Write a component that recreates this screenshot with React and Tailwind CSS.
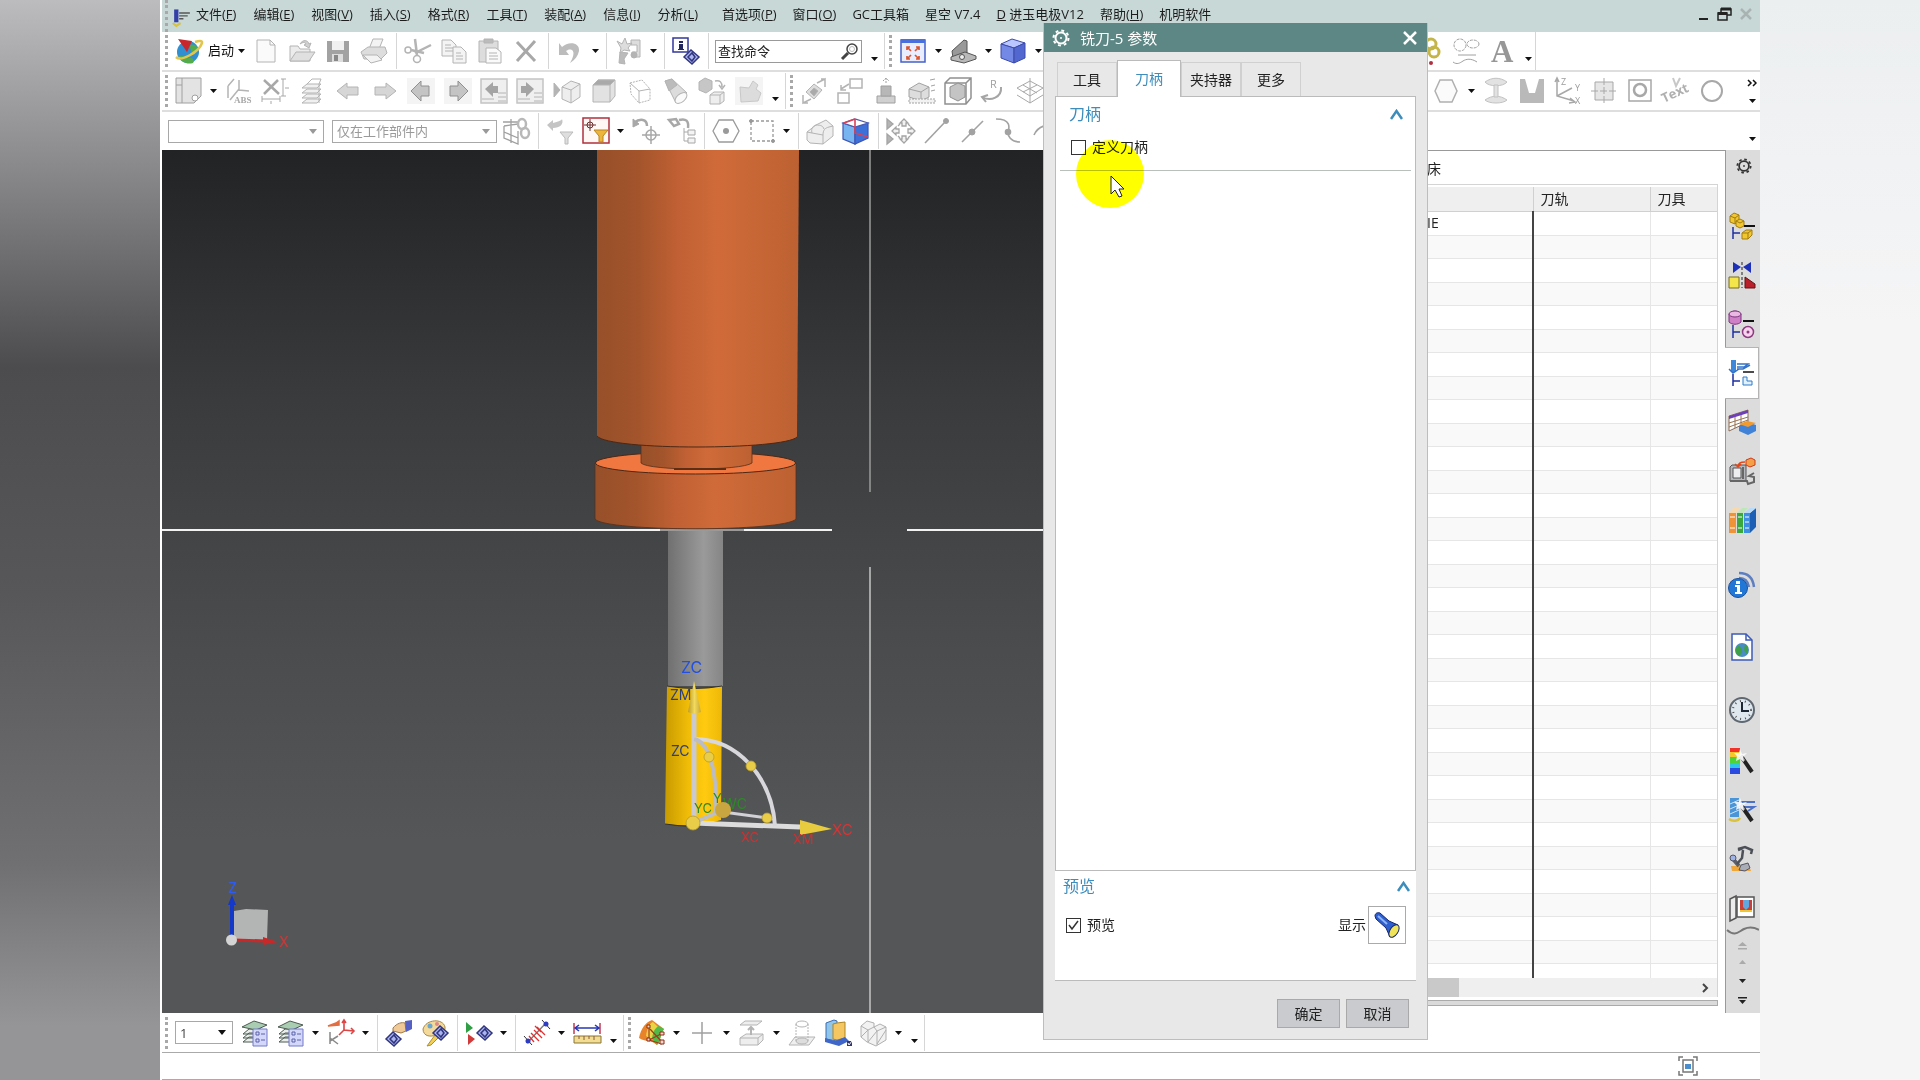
import React, { useState } from 'react';

const fileMenus = [
  ['文件', 'F'],
  ['编辑', 'E'],
  ['视图', 'V'],
  ['插入', 'S'],
  ['格式', 'R'],
  ['工具', 'T'],
  ['装配', 'A'],
  ['信息', 'I'],
  ['分析', 'L'],
];

const extraMenus = [
  ['首选项', 'P'],
  ['窗口', 'O'],
  ['GC工具箱'],
  ['星空 V7.4'],
  ['进玉电极V12', 'D', true],
  ['帮助', 'H'],
  ['机明软件'],
];

const G = '#b4b4b4';
const L = '#ececec';

const sheets = (
  <g stroke="#4d5a52" fill="#e9eeea">
    <path d="M2 23l6-5h12l-6 5zM2 19l6-5h12l-6 5zM2 15l6-5h12l-6 5z" />
    <path d="M1 8l12-6 13 4-11 5z" fill="#a9cdb0" />
    <path d="M12 10h14v17H12z" fill="#d3d8fb" stroke="#7279c8" />
    <path d="M15 13h3v3h-3zM15 20h3v3h-3zM20 15h4M20 21h4" fill="none" stroke="#5a61a8" />
  </g>
);
const wand = (
  <g>
    <path d="M13 9l11 16" stroke="#222" strokeWidth="4" />
    <path d="M13 9l3 5" stroke="#999" strokeWidth="3" />
    <path d="M12 2l2 5 5-1-4 4 1 5-4-3-4 2 1-5-3-3 5 0z" fill="#fff" opacity=".85" />
  </g>
);
const rhomb = <path d="M0 7l7-7 8 7-7 7zM4 7l4-4 3 4-3 4z" fill="#aab4ee" stroke="#30357e" strokeWidth="1.5" />;

const icons = {
  app: <g><path d="M3 2h6v18H3z" fill="#3440a8" /><path d="M10 7h15M10 11h12M10 15h6" stroke="#555" strokeWidth="2" /><path d="M1 21l5 4 6-4" stroke="#d9c23c" strokeWidth="3" fill="none" /></g>,
  start: <g><circle cx="13" cy="15" r="11" fill="#2f8fd0" /><path d="M4 19c4-1 6 3 10 2s6 3 4 5c-6 2-12-1-14-7zM14 8c6-2 9 2 9 6l-6 2z" fill="#53ab4c" /><path d="M1 20C6 25 24 15 27 6c1-3-4-2-7-1" fill="none" stroke="#e2c64b" strokeWidth="2.5" /><path d="M3 2l14 2-5 11z" fill="#c8262d" /></g>,
  file: <g stroke={G} fill="#fafafa"><path d="M5 3h13l5 5v17H5z" /><path d="M18 3v5h5" fill="none" /></g>,
  open: <g stroke={G} fill={L}><path d="M2 24V9h8l2 3h10v12z" /><path d="M2 24l6-9h19l-6 9z" fill="#e0e0e0" /><path d="M12 7c3-5 8-4 9 0l2-1-2 5-5-3 2-1c-1-2-3-2-6 0z" fill="#d0d0d0" /></g>,
  save: <g><path d="M3 4h22v21H3z" fill="#a2a2a2" /><path d="M8 4h12v9H8z" fill="#f1f1f1" /><path d="M8 17h11v8H8z" fill="#ddd" /><path d="M10 18h4v6h-4z" fill="#888" /></g>,
  print: <g stroke={G} fill="#f3f3f3"><path d="M9 12l4-10h10l-4 10z" /><path d="M1 15l7-5h17l2 6-6 6H4z" fill="#ddd" /><path d="M3 18h14l5 5-11 3z" /></g>,
  cut: <g stroke={G} strokeWidth="2.5" fill="none"><path d="M13 18l-2-16M11 16l16-8" /><path d="M7 13l13 3" /><circle cx="4" cy="13" r="3" strokeWidth="1.5" /><circle cx="13" cy="22" r="3.5" strokeWidth="1.5" /></g>,
  copy: <g stroke={G} fill="#f4f4f4"><path d="M2 3h9l5 5v11H2zM5 8h6M5 11h8M5 14h8" /><path d="M13 10h8l5 5v11H13z" /><path d="M16 16h5M16 19h7M16 22h7" /></g>,
  paste: <g stroke={G} fill="#ddd"><path d="M3 4h19v21H3z" /><path d="M8 2h9v4H8z" fill="#bbb" /><path d="M10 11h10l5 4v11H10z" fill="#fafafa" /><path d="M13 16h8M13 19h9M13 22h9" /></g>,
  del: <path d="M5 5l18 19M23 4L5 24" stroke="#a8a8a8" strokeWidth="3" />,
  undo: <path d="M3 6l3 4c6-6 18-5 17 4-1 5-4 9-9 12 3-5 5-11 2-13-3-1-4 0-6 1l3 4H3z" fill="#bcbcbc" />,
  weld: <g stroke={G} fill="#ddd"><path d="M17 3h9v17h-8v-5h5V8h-6z" /><path d="M6 15l8 1-4 6 1 5-6-1z" fill="#bbb" /><path d="M3 4l5 3 3-6 2 6 5-1-4 5 2 3-6-1-4 3 1-5z" /><circle cx="20" cy="18" r="3" fill={G} /></g>,
  info: <g><path d="M1 1h15v14H1z" fill="#fff" stroke="#33379a" strokeWidth="1.5" /><path d="M7 4h4v2H7zM7 7h4v5h1v1H6v-1h1z" fill="#22265e" /><g transform="translate(12 13)">{rhomb}</g></g>,
  fit: <g><path d="M2 3h24v22H2z" fill="#e8edff" stroke="#4560c8" strokeWidth="1.5" /><path d="M2 2h24v4H2z" fill="#4a70dd" /><path d="M8 10l4 4M20 10l-4 4M8 22l4-4M20 22l-4-4M8 13v-3h3M17 10h3v3M8 19v3h3M17 22h3v-3" stroke="#d8552f" strokeWidth="1.7" fill="none" /></g>,
  seat: <g stroke="#555" fill="#999"><path d="M3 14L15 3l3 1v12l-14 5z" /><path d="M2 20l14-5 11 4v3l-12 4-13-3z" fill="#b8b8b8" /><circle cx="13" cy="20" r="2.5" fill="#eee" /></g>,
  cube: <g stroke="#3c4ba8"><path d="M2 7l11-5 13 4-11 5z" fill="#b9c6ff" /><path d="M2 7l13 4v15L2 21z" fill="#7489e6" /><path d="M26 6v15l-11 5V11z" fill="#5267cf" /></g>,
  chain: <g fill="none"><path d="M1 12l8 4M3 24l8 1" stroke="#8b4aa0" strokeWidth="1.5" /><circle cx="15" cy="7" r="5" stroke="#c3b548" strokeWidth="3" /><circle cx="18" cy="15" r="5" stroke="#c3b548" strokeWidth="3" /><circle cx="15" cy="26" r="2" fill="#b03040" /></g>,
  shapes: <g stroke="#a0a0a0" fill="none"><circle cx="8" cy="8" r="6" strokeDasharray="3 1" /><ellipse cx="21" cy="7" rx="6" ry="4" strokeDasharray="3 1" /><path d="M6 18h18M1 25c4 3 7 1 10-1s8-3 14 1" /></g>,
  letterA: <text x="3" y="25" fontSize="31" fontWeight="700" fill="#979797" fontFamily="Liberation Serif, serif">A</text>,
  sheet: <g stroke="#a0a0a0" fill="#e3e3e3"><path d="M1 1h25v18l-7 7H1z" /><path d="M1 8h6V1M7 8v18" fill="none" /><circle cx="20" cy="21" r="3" fill="#fff" /></g>,
  abs: <g stroke={G} fill="none" strokeWidth="1.5"><path d="M3 9v12M3 9l6-7M14 3v10l10 1M14 12L5 23" /><text x="9" y="26" fontSize="9" fontWeight="700" fill="#a8a8a8" stroke="none" fontFamily="Liberation Serif, serif">ABS</text></g>,
  dims: <g stroke="#a8a8a8" fill="none"><path d="M3 3l15 14M17 3L3 17" strokeWidth="2.5" /><path d="M22 2v17M20 2h5M20 19h5M1 22h18M1 19v6M19 19v6" /><path d="M24 11h4M10 24v3" /></g>,
  layers: <g stroke={G} fill="#f0f0f0"><path d="M4 26l5-4h14l-4 4zM4 21l5-4h14l-4 4zM4 16l5-4h14l-4 4zM4 11l5-4h14l-4 4z" /><path d="M9 7l5-5h9l-2 5v19" fill="none" /></g>,
  left: <path d="M3 14l10-8v4h11v8H13v4z" fill="#d6d6d6" stroke={G} />,
  right: <path d="M25 14L15 6v4H4v8h11v4z" fill="#d6d6d6" stroke={G} />,
  leftBox: <g><path d="M0 1h28v26H0z" fill="#f4f4f4" /><path d="M4 14L14 4v5h8v10h-8v5z" fill="#c4c4c4" stroke="#909090" /></g>,
  rightBox: <g><path d="M0 1h28v26H0z" fill="#f4f4f4" /><path d="M24 14L14 4v5H6v10h8v5z" fill="#c4c4c4" stroke="#909090" /></g>,
  leftPane: <g><path d="M1 2h26v24H1z" fill="#efefef" stroke="#c4c4c4" strokeWidth="1.5" /><path d="M5 12l8-7v4h5v7h-5v4z" fill="#a4a4a4" /><path d="M18 16h8M18 20h8M18 24h8M2 22h12" stroke="#b4b4b4" /></g>,
  rightPane: <g><path d="M1 2h26v24H1z" fill="#efefef" stroke="#c4c4c4" strokeWidth="1.5" /><path d="M18 12l-8-7v4H5v7h5v4z" fill="#a4a4a4" /><path d="M18 16h8M18 20h8M18 24h8M2 22h12" stroke="#b4b4b4" /></g>,
  boxIn: <g stroke={G} fill="#eee"><path d="M1 6l6 7-6 7z" fill={G} /><path d="M9 10l9-6 9 3v13l-9 6-9-4zM9 10l9 3v13M18 13l9-6" /></g>,
  slab: <g stroke={G} fill="#e2e2e2"><path d="M4 8l5-5h17v16l-5 6H4z" /><path d="M4 8l5-5h17l-5 5z" fill="#a9a9a9" /><path d="M21 8v17" fill="none" /></g>,
  wire: <g stroke={G} fill="none" strokeDasharray="2 1"><path d="M4 6l12-3 8 9v11l-11 3-8-9z" /><path d="M4 6l9 8v12M13 14l11-2" strokeDasharray="none" /></g>,
  cone: <g stroke={G} fill="#dcdcdc"><path d="M3 4l7-2 15 14-11 10z" /><ellipse cx="19" cy="21" rx="7" ry="4" fill="#fafafa" transform="rotate(-40 19 21)" /><path d="M3 4l7-2 5 6-8 6z" fill="#bbb" /></g>,
  hexBox: <g stroke={G} fill="#c6c6c6"><path d="M1 5l6-4 7 3v8l-6 4-7-3z" /><path d="M12 18l4-3h10v9l-4 3H12zM12 18h10v9M22 18l4-3" fill="#eee" /><path d="M17 4c5-1 7 1 7 6M21 8l3 4 3-4" fill="none" strokeWidth="1.5" /></g>,
  sack: <g><path d="M0 0h28v28H0z" fill="#f4f4f4" /><path d="M5 10l9 1 4-7 5 4-2 4 5 4-3 8-17 1z" fill="#dcdcdc" stroke="#c8c8c8" /></g>,
  resize: <g stroke={G} fill="#ddd"><path d="M6 15l8-8 8 6-8 9z" /><path d="M10 15l4-4 4 3-4 5z" fill="#aaa" /><path d="M17 6l8-4v8M21 2h4M3 18v8l8-4M3 26h5" fill="none" strokeWidth="1.500" /></g>,
  boxes: <g stroke={G} fill="none" strokeWidth="1.5"><path d="M14 2h12v9H14zM2 16h11v10H2z" /><path d="M5 12l8-5M5 8v5h5" /></g>,
  pedestal: <g stroke="#a0a0a0" fill="#d0d0d0"><path d="M5 19h18v7H5z" /><path d="M9 9h10v10H9z" fill="#b7b7b7" /><path d="M14 1v6M11 4l3-3 3 3" fill="none" strokeDasharray="2 1" /></g>,
  ruler: <g stroke="#a2a2a2" fill="#ddd"><path d="M1 12l10-6 10 4v10l-8 4-12-4zM1 12l12 3v9M13 15l8-5" /><path d="M1 22h26v4H1z" fill="#f2f2f2" strokeDasharray="2 1" /><path d="M22 3l5-1M23 9l4-1M23 14l4-1" /></g>,
  caged: <g stroke="#909090" fill="none"><path d="M1 6l5-5h21v20l-5 6H1zM1 6h21v21M22 6l5-5" strokeWidth="1.5" /><path d="M6 10l8-4 7 3v11l-7 4-8-4z" fill="#c4c4c4" /></g>,
  hook: <g stroke="#a5a5a5" fill="none" strokeWidth="2"><path d="M2 20c9 5 20 0 19-10" /><path d="M6 25l-4-5 6-2" /><text x="10" y="11" fontSize="11" fill="#a0a0a0" stroke="none">R</text></g>,
  mesh: <g stroke="#a8a8a8" fill="none"><path d="M1 11l13-7 13 7-13 8zM1 18l13 8 13-8M7 8l14 8M21 8L7 15M14 1v25" /></g>,
  hexagon: <path d="M3 14L8 3h12l5 11-5 11H8z" fill="#fbfbfb" stroke="#b0b0b0" strokeWidth="1.5" />,
  spool: <g fill="#e2e2e2" stroke="#c2c2c2"><path d="M3 5c7-5 15-5 22 0-4 5-18 5-22 0zM3 23c7-5 15-5 22 0-4 4-18 4-22 0z" /><path d="M12 8h4v12h-4z" /></g>,
  notch: <path d="M2 2h5l4 14h6l4-14h5v24H2z" fill="#b9b9b9" />,
  xyz: <g stroke="#a8a8a8" fill="none"><path d="M3 2v17l17 5M3 19l15-8M1 5l2-4 2 4M16 21l5 4-6 1" strokeWidth="1.5" /><g fontSize="9" fill="#9c9c9c" stroke="none"><text x="7" y="8">Z</text><text x="21" y="14">Y</text><text x="21" y="27">X</text></g></g>,
  target: <g stroke="#a8a8a8"><path d="M5 5h18v18H5z" fill="#e6e6e6" /><path d="M14 1v26M1 14h26" strokeDasharray="7 2" /></g>,
  hole: <g stroke="#a8a8a8" fill="none" strokeWidth="1.5"><path d="M3 3h22v21H3z" /><circle cx="14" cy="13" r="6" strokeWidth="2.5" /></g>,
  text3d: <g fill="#b0b0b0"><text x="2" y="26" fontSize="13" fontWeight="700" transform="rotate(-25 2 26)">Text</text><path d="M11 1l3 8 4-8" stroke="#c8c8c8" fill="none" strokeWidth="2" /></g>,
  circle: <circle cx="14" cy="14" r="10" fill="none" stroke="#a8a8a8" strokeWidth="2" />,
  link: <g stroke="#a0a0a0" fill="none" strokeWidth="1.3"><path d="M2 9l14-2M9 2v24M2 9v12l14 6V14M2 15l14 6M1 5h15" /><ellipse cx="20" cy="7" rx="4" ry="5" stroke="#b8b8b8" strokeWidth="2.5" /><ellipse cx="23" cy="16" rx="4" ry="5" stroke="#b8b8b8" strokeWidth="2.5" /></g>,
  filter: <g fill="#c4c4c4"><path d="M1 8l6-5v3c5-1 9-3 9-4 2 5-2 9-9 9v3z" /><path d="M14 15h13l-5 6v6h-3v-6z" fill="#dedede" stroke="#bbb" /></g>,
  filterOn: <g><path d="M1 1h26v25H1z" fill="#fff8f4" stroke="#b0303e" strokeWidth="1.5" /><circle cx="8" cy="8" r="3" fill="none" stroke="#6d3030" /><path d="M8 2v12M2 8h12" stroke="#6d3030" /><path d="M12 13h14l-5 6v6h-4v-6z" fill="#edb53b" stroke="#b98420" /></g>,
  back: <g stroke="#a8a8a8" fill="none"><path d="M2 6c6-5 13-4 13 3" strokeWidth="2.5" /><path d="M1 2v8l6-3z" fill="#a8a8a8" /><circle cx="19" cy="18" r="5" strokeWidth="1.5" /><path d="M19 9v18M10 18h18" strokeWidth="1.5" /></g>,
  tree: <g stroke="#a8a8a8" fill="#d0d0d0"><path d="M1 3l7-1 3 5-5 2zM11 3c7-2 10 1 9 8" fill="none" strokeWidth="2.5" /><path d="M20 13h7v5h-7zM20 21h7v5h-7z" fill="#f4f4f4" /><path d="M16 15h4M16 24h4M16 11v13" /></g>,
  hexDot: <g><path d="M1 14L7 3h14l6 11-6 11H7z" fill="none" stroke="#9a9a9a" strokeWidth="1.3" /><circle cx="14" cy="14" r="3" fill="#9a9a9a" /></g>,
  marquee: <g stroke="#999" fill="none"><path d="M3 4h22v20H3z" strokeDasharray="3 2" strokeWidth="1.3" /><circle cx="3" cy="4" r="1.5" fill="#999" /><circle cx="25" cy="24" r="1.5" fill="#999" /></g>,
  shell: <g stroke={G} fill="#eee"><path d="M1 15l9-7 10-5 7 6v10l-10 8-13-1-3-3z" /><path d="M10 8c-4 1-5 5-4 8l11 2v9M6 16l-5-1M17 18c0-5 2-7 6-8l4-1M10 8c5 0 7 1 8 4" fill="none" /></g>,
  section: <g strokeWidth="1.2"><path d="M1 6l12 4v17L1 22z" fill="#78b4f0" stroke="#3e55b4" /><path d="M13 10l13-4v15l-13 6z" fill="#3d70d8" stroke="#3e55b4" /><path d="M1 6l12-4 13 4-13 4z" fill="#fff" stroke="#4c5bb0" /><path d="M13 2v14l13 4M13 2L2 6" fill="none" stroke="#d64258" strokeWidth="1.6" /></g>,
  explode: <g stroke="#a4a4a4" fill="#f2f2f2" strokeWidth="1.3"><path d="M1 2l6 5-6 5zM1 17l6 5-6 5z" fill="#b4b4b4" /><path d="M18 2l4 4h-2v3h-4V6h-2zM18 26l4-4h-2v-3h-4v3h-2zM6 14l4-4v2h3v4h-3v2zM29 14l-4-4v2h-3v4h3v2z" /><path d="M12 9l2-2M24 9l-2-2M12 19l2 2M24 19l-2 2" /></g>,
  lineEnd: <g stroke="#a2a2a2" fill="#a2a2a2"><path d="M3 26L24 4" strokeWidth="1.6" /><circle cx="24" cy="4" r="2.5" /></g>,
  lineMid: <g stroke="#a2a2a2" fill="#a2a2a2"><path d="M4 25L25 4" strokeWidth="1.6" /><circle cx="14" cy="15" r="3" /></g>,
  curve: <g stroke="#a2a2a2" fill="none" strokeWidth="1.6"><path d="M2 2c18 0 12 12 12 14s2 9 12 9" /><circle cx="14" cy="15" r="2.5" fill="#a2a2a2" /></g>,
  arc: <path d="M4 18c4-9 14-12 22-8" stroke="#a2a2a2" fill="none" strokeWidth="1.6" />,
  sheets,
  wcs: <g fill="none"><path d="M1 7l8-3 3-2v4z" fill="#e26e42" stroke="#e26e42" strokeWidth="1.500" /><path d="M17 2v9l10 1M17 11l-5 5M24 9l3 3-3 3M15 4l2-3 2 3" stroke="#d44" strokeWidth="1.600" /><path d="M3 13v12M3 19l8 6M3 22l8-5" stroke="#888" strokeWidth="1.500" /></g>,
  pointTo: <g><path d="M8 9c4-5 9-6 12-5l1 8-5 2-8-2z" fill="#f0c997" stroke="#9d7747" /><path d="M20 2l7-1v9l-6 3z" fill="#565fc4" /><g transform="translate(1 13)">{rhomb}</g></g>,
  palette: <g><path d="M2 10C5 0 22-1 24 8c1 6-7 6-10 8s-12 2-12-6z" fill="#f3d99a" stroke="#a98843" /><circle cx="9" cy="7" r="2.5" fill="#6aa7d0" /><circle cx="16" cy="5" r="2" fill="#d88" /><path d="M14 16l-8 11 4-1 9-9z" fill="#f2cf56" stroke="#b18f2a" /><g transform="translate(12 7)">{rhomb}</g></g>,
  play: <g><path d="M1 3l7 6-7 5z" fill="#2f9e44" /><path d="M3 15l7 5-7 6z" fill="#cf3a3a" /><g transform="translate(12 7)">{rhomb}</g></g>,
  hatch: <g><path d="M4 24L22 5" stroke="#777" strokeWidth="1.3" /><path d="M8 14l8 8M11 11l8 8M14 8l8 8M12 7l6 6M6 17l5 6" stroke="#d33" strokeWidth="1.3" /><path d="M19 1l8 9M1 17l8 9" stroke="#333" /><circle cx="23" cy="5" r="2.500" fill="#2d3cc0" /><circle cx="5" cy="22" r="2.500" fill="#2d3cc0" /></g>,
  measure: <g><path d="M1 4v11M27 4v11" stroke="#c33b52" strokeWidth="1.5" /><path d="M3 9h22M6 6L2 9l4 3M22 6l4 3-4 3" stroke="#2738b8" strokeWidth="1.5" fill="none" /><path d="M1 17h27v7H1z" fill="#f2dd92" stroke="#8a7436" /><path d="M6 17v3M11 17v4M16 17v3M21 17v4" stroke="#8a5a36" /></g>,
  rainbow: <g><path d="M1 19C3 9 8 3 14 1l8 6 4 3c-4 5-3 12-7 16-7-6-10-2-18-7z" fill="#e8832b" /><path d="M8 17C9 9 12 4 15 3l5 5-4 14z" fill="#e9d444" /><path d="M14 20c1-8 3-11 7-13l5 3c-4 5-3 12-7 16z" fill="#52ba48" /><path d="M11 7v14l12-6M12 10l12 13M11 21l13 4" stroke="#a23a1c" strokeWidth="1.2" fill="none" /><path d="M9 6h3v3H9zM9 19h3v3H9zM22 13h4v3h-4zM22 21h4v4h-4z" fill="#f6d9cc" stroke="#8a2a14" /></g>,
  plus: <path d="M14 3v22M4 14h20" stroke="#a0a0a0" strokeWidth="1.5" />,
  extrude: <g stroke={G} fill="#eee"><path d="M2 6l5-4h17l-5 4zM2 19l6-4h17v6l-5 5H2zM2 19h18v7M20 19l5-4" /><path d="M13 16v-7M10 11l3-3 3 3" fill="none" strokeWidth="2" /></g>,
  column: <g stroke={G} fill="none"><path d="M1 26l6-8h20l-6 8z" fill="#efefef" /><ellipse cx="14" cy="5" rx="6" ry="3" /><ellipse cx="14" cy="22" rx="6" ry="3" fill="#ddd" /><path d="M8 5v17M20 5v17" strokeDasharray="2 1" /></g>,
  bound: <g><path d="M2 4l8-3 3 1v20l-11-2z" fill="#8fc6ea" stroke="#3a6db5" /><path d="M9 5l4-1 8-1v16l-8 2-4-1z" fill="#f4c763" stroke="#ae8425" /><path d="M1 19l10 3 10-4 4 4-10 5-14-4z" fill="#3f66c8" /><path d="M23 22h5v5h-5z" fill="#35386e" /><path d="M24 24l1 2 3-4" stroke="#fff" fill="none" /></g>,
  frame: <g stroke="#b0b0b0" fill="#f2f2f2"><path d="M1 7l6-5 7 2v4l6-3 6 3v13l-10 6-9-4-6-5z" /><path d="M1 7l7 4v12M8 11l6-3M14 8l3 4v14M17 12l9-4M1 18l7-7M8 23l9-11M17 25l9-14" fill="none" /></g>,
  assemblyNav: <g stroke="#a17c12"><path d="M2 4l4-3 5 2v6l-4 3-5-2z" fill="#f2c62e" /><path d="M2 4l5 2 4-3M7 6v6" fill="none" /><path d="M8 9l4-2 4 2v5l-4 2-4-2z" fill="#f2c62e" /><path d="M8 9l4 2 4-2" fill="none" /><path d="M14 21l4-3h6v5l-4 4h-6z" fill="#f2c62e" /><path d="M14 21h6l4-3M20 21v6" fill="none" /><path d="M5 15v12M5 21h7" stroke="#1d2fa0" strokeWidth="1.500" /><path d="M16 14h11" stroke="#111" strokeWidth="2" /></g>,
  constraint: <g><path d="M5 1l8 5-8 6zM23 1l-8 5 8 6z" fill="#1e2fb8" /><path d="M14 1v26" stroke="#222" strokeDasharray="3 2" /><path d="M1 16h10v11H1z" fill="#f4e64a" stroke="#776c1a" /><path d="M17 16l10 7v4H17z" fill="#b81f2a" stroke="#611" /></g>,
  partNav: <g><path d="M1 4c3-4 9-4 12 0v8c-3 3-9 3-12 0z" fill="#cf7fc6" stroke="#7d3580" /><ellipse cx="7" cy="4" rx="6" ry="3" fill="#eab8e2" stroke="#7d3580" /><path d="M5 15v13M5 22h7" stroke="#1d2fa0" strokeWidth="1.5" /><path d="M15 11h11" stroke="#111" strokeWidth="2" /><circle cx="20" cy="22" r="5.500" fill="#f7d3ee" stroke="#8d3a80" strokeWidth="1.5" /><circle cx="20" cy="22" r="1.5" fill="#8d3a80" /></g>,
  operNav: <g><path d="M3 1h5v12H3z" fill="#3f87d8" /><path d="M1 10l4 4 6-4M9 5h11l-4 3H9M9 10h6l7-4" stroke="#3372c8" fill="none" strokeWidth="1.5" /><path d="M5 15v12M5 22h7" stroke="#1d2fa0" strokeWidth="1.5" /><path d="M15 13h11" stroke="#111" strokeWidth="1.500" /><path d="M15 18h4v4h5v4h-9z" fill="#e2f1ff" stroke="#2d7bc8" /></g>,
  calendar: <g><path d="M1 8l19-6v12L1 23z" fill="#fff" stroke="#8a6a55" /><path d="M1 8l19-6v3L1 11z" fill="#6d3fb8" /><path d="M1 15l19-6M1 19l19-7M7 9v11M13 7v11" stroke="#9a7350" /><path d="M11 18l8-4 9 3v6l-8 4-9-4z" fill="#3f82d8" /><path d="M11 16l8-3 9 2-8 4z" fill="#f29a2e" /></g>,
  machine: <g><path d="M2 10l2-2h14v16H2z" fill="#b4b8bc" stroke="#555" /><path d="M5 11h8v10H5z" fill="#eceef0" stroke="#555" /><path d="M15 10v12" stroke="#666" strokeWidth="2" /><path d="M2 24h17l1 3 6-2v-5l-5-1 5-3" fill="none" stroke="#666" strokeWidth="2" /><path d="M18 3l5-2 4 2v5l-5 2-4-2z" fill="#f4a049" stroke="#cf3a18" /><path d="M17 5c-5 0-6 1-7 4M7 7l3 3 3-3" stroke="#e0481c" strokeWidth="1.500" fill="none" /></g>,
  books: <g><path d="M1 7h7v20H1z" fill="#ef9338" /><path d="M1 7l4-5h7l-4 5z" fill="#f8d9ae" /><path d="M9 7h6v20H9z" fill="#3ba83e" /><path d="M9 7l5-5h6l-5 5z" fill="#bfe6b6" /><path d="M16 7h6v20h-6z" fill="#3c8fe2" /><path d="M22 7l6-5v19l-6 6z" fill="#1c5fb4" /><path d="M16 7l6-5h6l-6 5z" fill="#b7dbfa" /><path d="M2 11h5M10 11h4M17 11h4M2 22h5M10 22h4M17 22h4M17 16h4" stroke="#fff" /></g>,
  feed: <g><path d="M11 3c9 0 14 5 15 14M11 8c5 0 9 3 10 9" stroke="#5d7fc0" strokeWidth="2.500" fill="none" /><circle cx="10" cy="18" r="9.500" fill="#2277d6" stroke="#1c4f9c" /><path d="M8 11h4v3H8zM7 15h5v7h2v2H7v-2h2v-5H7z" fill="#fff" /></g>,
  page: <g><path d="M4 1h14l6 6v20H4z" fill="#fff" stroke="#3d5bb8" strokeWidth="1.5" /><path d="M18 1v6h6" fill="none" stroke="#3d5bb8" strokeWidth="1.5" /><circle cx="14" cy="17" r="7" fill="#4a8cc4" /><path d="M8 15c3-4 5-1 6 2s-2 5-3 6c-3-1-4-5-3-8zM17 11c3 2 4 6 2 10l-3-4z" fill="#3fa04a" /></g>,
  clock: <g><circle cx="14" cy="14" r="12" fill="#dfe7ef" stroke="#5f6770" strokeWidth="2" /><circle cx="14" cy="14" r="9" fill="none" stroke="#555" strokeDasharray="1 4" strokeWidth="2" /><path d="M14 6v9h7" stroke="#1c2733" strokeWidth="2" fill="none" /></g>,
  spectrum: <g><path d="M2 1h10v5H2z" fill="#f0322b" /><path d="M2 5h10v5H2z" fill="#f5c92e" /><path d="M2 10h10v6H2z" fill="#4fd437" /><path d="M2 16h10v5H2z" fill="#2cc6e8" /><path d="M2 21h10v6H2z" fill="#2b4ae0" />{wand}</g>,
  drill: <g><path d="M2 2h9v19H2z" fill="#4a94d8" /><path d="M2 8l9-4M2 13l9-4M2 18l9-4" stroke="#cfe4f7" /><path d="M12 6h15M14 11h12l-6 4" stroke="#4a72c8" strokeWidth="2" fill="none" /><path d="M1 23c4 3 9 2 11-1" stroke="#d9c23c" strokeWidth="2.5" fill="none" />{wand}</g>,
  robot: <g><path d="M3 21h18l2 5H4z" fill="#efa63a" /><path d="M5 14l6 7" stroke="#5c6068" strokeWidth="4" /><path d="M9 19l5-6 1-8M10 4l7-2 7 3-1 4M15 3l-5 2" fill="none" stroke="#4c5058" strokeWidth="2.500" /><path d="M13 20l7-2 2 5-5 3-6-1z" fill="#a9adb5" stroke="#556" /><circle cx="5" cy="13" r="3" fill="#9fb4e4" stroke="#556" /></g>,
  door: <g><path d="M9 3h17v20H9z" fill="#fff" stroke="#555" strokeWidth="1.500" /><path d="M2 5l6-3v22l-6 3z" fill="#ececec" stroke="#555" strokeWidth="1.500" /><path d="M12 6h12v12H12z" fill="#c9403a" /><path d="M15 6h6v7l-3 3-3-3z" fill="#62a8e0" /><path d="M12 16h12v2H12z" fill="#f2c62e" /></g>,
};

function Icon({ name, size = 28 }) {
  return (
    <svg className="overflow-visible" width={size} height={size} viewBox="0 0 28 28" fill="none" aria-hidden="true">
      {icons[name]}
    </svg>
  );
}

const Tool = ({ name }) => (
  <button type="button" aria-label={name} className="flex h-9 w-9 shrink-0 items-center justify-center hover:bg-gray-100">
    <Icon name={name} />
  </button>
);

const Arrow = ({ low }) => (
  <span className={low ? 'flex w-[14px] shrink-0 justify-end pt-4 pr-[2px]' : 'flex w-[14px] shrink-0 justify-center'}>
    <svg width="7" height="4" viewBox="0 0 7 4"><path d="M0 0h7L3.500 4z" fill="#111" /></svg>
  </span>
);

const Sep = () => <span className="mr-[3px] ml-1 h-9 w-px shrink-0 bg-[#d6d6d6]" />;
const Grip = () => <span className="mr-[3px] ml-px h-8 w-0 shrink-0 border-l-3 border-dotted border-[#a8a8a8]" />;

// "|" separator, "v" drop-down arrow, "_" lowered overflow arrow, ":" grip
function Strip({ items }) {
  return items.map((it, i) => {
    if (it === '|') return <Sep key={i} />;
    if (it === 'v') return <Arrow key={i} />;
    if (it === '_') return <Arrow key={i} low />;
    if (it === ':') return <Grip key={i} />;
    return <Tool key={i} name={it} />;
  });
}

function MenuGroup({ items, className }) {
  return (
    <nav className={'flex pb-1 ' + className}>
      {items.map(([name, key, before]) => (
        <button key={name} type="button" className="whitespace-nowrap">
          {before && <><u>{key}</u>{' '}</>}
          {name}
          {key && !before && <>(<u>{key}</u>)</>}
        </button>
      ))}
    </nav>
  );
}

function DropDown({ label, value, className, arrow }) {
  return (
    <span className={'relative flex shrink-0 items-center ' + className}>
      <select aria-label={label} disabled={arrow !== '#111'} className="h-[23px] w-full appearance-none border border-[#a8a8a8] bg-white pl-1 text-[13px] leading-5 text-[#444] disabled:text-[#9a9a9a]">
        <option>{value}</option>
      </select>
      <svg className="pointer-events-none absolute right-[7px]" width="8" height="5" viewBox="0 0 8 5"><path d="M0 0h8L4 5z" fill={arrow} /></svg>
    </span>
  );
}

const Gear = ({ color, size }) => (
  <svg width={size} height={size} viewBox="0 0 18 18" fill="none" stroke={color} aria-hidden="true">
    <circle cx="9" cy="9" r="5.500" strokeWidth="2" />
    <circle cx="9" cy="9" r="7.500" strokeWidth="2" strokeDasharray="2.900 3" />
    <circle cx="9" cy="9" r="1" fill={color} stroke="none" />
  </svg>
);

const Chevron = () => (
  <svg width="13" height="11" viewBox="0 0 13 11" fill="none" stroke="#3c8cbc" strokeWidth="2.500" aria-hidden="true">
    <path d="M1 10l5.500-8L12 10" />
  </svg>
);

function Viewport() {
  return (
    <svg className="block h-full w-full" viewBox="162 150 882 863" preserveAspectRatio="xMinYMin slice" role="img" aria-label="刀具预览">
      <defs>
        <linearGradient id="bg" x1="0" y1="0" x2="0" y2="1">
          <stop offset="0" stopColor="#212325" />
          <stop offset=".29" stopColor="#393b3c" />
          <stop offset=".56" stopColor="#4a4b4d" />
          <stop offset=".8" stopColor="#555658" />
        </linearGradient>
        <linearGradient id="holder">
          <stop offset="0" stopColor="#96502a" />
          <stop offset=".2" stopColor="#a3542b" />
          <stop offset=".4" stopColor="#c06034" />
          <stop offset=".6" stopColor="#d06b39" />
          <stop offset="1" stopColor="#bd6132" />
        </linearGradient>
        <linearGradient id="shank">
          <stop offset="0" stopColor="#707070" />
          <stop offset=".65" stopColor="#9a9a9a" />
          <stop offset="1" stopColor="#858585" />
        </linearGradient>
        <linearGradient id="flute">
          <stop offset="0" stopColor="#c79a00" />
          <stop offset=".4" stopColor="#f0bc08" />
          <stop offset=".7" stopColor="#ffca10" />
          <stop offset="1" stopColor="#eeb808" />
        </linearGradient>
        <linearGradient id="cone">
          <stop offset="0" stopColor="#b89c2e" />
          <stop offset=".5" stopColor="#f3d95c" />
          <stop offset="1" stopColor="#c5a838" />
        </linearGradient>
      </defs>
      <rect x="162" y="150" width="882" height="863" fill="url(#bg)" />

      <path d="M870 150v342" stroke="#9b9b9b" strokeWidth="1.500" />
      <path d="M870 567v446" stroke="#c6c6c6" strokeWidth="1.500" />
      <path d="M162 530h670M907 530h137" stroke="#f2f2f2" strokeWidth="2" />

      <path d="M668 529h55v157h-55z" fill="url(#shank)" />
      <path d="M660 530h84" stroke="#999" strokeWidth="2" />
      <path d="M667 686q28 5 55 0l-1 134q-26 8-56 4z" fill="url(#flute)" />
      <path d="M667 686q28 5 55 0" fill="none" stroke="#333" />
      <path d="M665 824q28 4 40 1" fill="none" stroke="#333" />

      <path d="M595 463v56c10 13 190 13 201 0v-56z" fill="url(#holder)" stroke="#57301c" strokeWidth=".8" />
      <ellipse cx="695.500" cy="463" rx="100" ry="11" fill="#f07840" stroke="#4c2815" />
      <path d="M641 440v23c8 8 100 8 111 0v-23z" fill="url(#holder)" stroke="#57301c" strokeWidth=".8" />
      <path d="M674 469h52" stroke="#5d2e16" strokeWidth="2" />
      <path d="M597 150v286c12 15 188 14 200 1l2-287z" fill="url(#holder)" />
      <path d="M597 436c12 15 188 14 200 1" fill="none" stroke="#4c2815" />

      <path d="M694 823V712" stroke="#c9c9cf" strokeWidth="5" />
      <path d="M694 681l7 31q-7 3-13 0z" fill="url(#cone)" />
      <path d="M693 823l107 4" stroke="#dcdcdc" strokeWidth="5" />
      <path d="M693 823l30-13" stroke="#bdbdc4" strokeWidth="4" />
      <path d="M723 812l52 7" stroke="#d2d2d6" strokeWidth="3" />
      <path d="M694 739c45 0 78 40 81 87" fill="none" stroke="#d8d8dc" strokeWidth="4" />
      <path d="M694 739c18 4 23 40 22 75" fill="none" stroke="#bcbcc4" strokeWidth="4" />
      <path d="M800 820l32 9-32 6z" fill="#e8cb3e" />
      <g fontFamily="Inter, 'Liberation Sans', sans-serif" fontSize="14">
        <text x="681" y="673" fontSize="16" fill="#2350e0">ZC</text>
        <text x="670" y="700" fill="#2b3f7c">ZM</text>
        <text x="671" y="756" fill="#2b3f7c">ZC</text>
        <text x="694" y="813" fontSize="13" fill="#2c8a24">YC</text>
        <text x="713" y="803" fontSize="13" fill="#2c8a24">Y</text>
        <text x="723" y="809" fill="#2c8a24">WC</text>
        <text x="741" y="842" fontSize="13" fill="#d03030">XC</text>
        <text x="793" y="844" fontSize="13" fill="#d03030">XM</text>
        <text x="832" y="835" fontSize="15" fill="#d83434">XC</text>
      </g>
      <circle cx="723" cy="810" r="8" fill="#c9a640" />
      <g fill="#e9cd49" stroke="#b59a2c" strokeWidth=".8">
        <circle cx="693" cy="823" r="7" />
        <circle cx="709" cy="757" r="5" />
        <circle cx="751" cy="766" r="5" />
        <circle cx="767" cy="818" r="5" />
      </g>

      <path d="M234 911l12-2 22 1-1 30h-33z" fill="#b3b4b4" />
      <path d="M232 940v-40" stroke="#1438c8" strokeWidth="4" />
      <path d="M232 895l4 10h-8z" fill="#1438c8" />
      <path d="M234 940l32 1" stroke="#c82828" strokeWidth="3" />
      <path d="M263 937l15 5-15 3z" fill="#c82828" />
      <circle cx="231.500" cy="940" r="5.500" fill="#d4d4d4" />
      <g fontFamily="Inter, 'Liberation Sans', sans-serif" fontSize="14" fontWeight="500">
        <text x="228" y="893" fill="#2f5cf0">Z</text>
        <text x="279" y="947" fill="#c43a3a">X</text>
      </g>
    </svg>
  );
}

function Navigator() {
  const rows = Array.from({ length: 33 }, (_, i) => i);
  return (
    <section className="flex w-[682px] shrink-0 flex-col border-t border-[#999] bg-white pr-[7px]">
      <h2 className="h-[33px] pl-[384px] text-sm leading-[35px] text-[#222]">床</h2>
      <div className="min-h-0 flex-1 overflow-hidden border-t border-r border-[#d4d4d4] pt-[2px]">
        <table className="w-full table-fixed border-collapse text-sm text-[#222]">
          <thead>
            <tr className="h-6 bg-[#efefef] text-left">
              <th className="border-b border-[#d0d0d0]" aria-label="名称" />
              <th className="w-[117px] border-r border-b border-l border-[#d0d0d0] pl-[7px] leading-5 font-normal">刀轨</th>
              <th className="w-[67px] border-b border-[#d0d0d0] pl-[7px] leading-5 font-normal">刀具</th>
            </tr>
          </thead>
          <tbody>
            {rows.map((i) => (
              <tr key={i} className={i % 2 ? 'h-[23px] bg-[#f9f9f9]' : 'h-6 bg-white'}>
                <td className="border-b border-[#e6e6e6] p-0 pl-[384px] leading-5">{i === 0 && 'IE'}</td>
                <td className="border-r border-b border-l-2 border-[#e6e6e6] border-l-[#444]" />
                <td className="border-b border-[#e6e6e6]" />
              </tr>
            ))}
          </tbody>
        </table>
      </div>
      <div className="flex h-[19px] shrink-0 border-r border-[#d4d4d4] bg-[#efefef]">
        <div className="w-[416px] bg-[#c9c9c9]" />
        <button type="button" aria-label="向右滚动" className="mr-2 ml-auto">
          <svg width="8" height="10" viewBox="0 0 8 10" fill="none" stroke="#444" strokeWidth="2"><path d="M2 1l4 4-4 4" /></svg>
        </button>
      </div>
      <div className="mt-[3px] mb-[7px] h-[6px] shrink-0 border border-[#aaa] bg-[#dadada]" />
    </section>
  );
}

const SideButton = ({ name }) => (
  <button type="button" aria-label={name} className="shrink-0"><Icon name={name} /></button>
);

function Sidebar() {
  return (
    <nav className="flex w-[35px] shrink-0 flex-col items-center border-l border-[#999] bg-[#dcdcdc] pr-[2px]">
      <button type="button" aria-label="资源条选项" className="mt-2 ml-1"><Gear color="#333" size={16} /></button>
      <div className="mt-[38px] flex flex-col items-center gap-[21px]">
        <SideButton name="assemblyNav" />
        <SideButton name="constraint" />
        <SideButton name="partNav" />
        <button type="button" aria-label="operNav" className="-mx-[2px] -my-3 flex w-[34px] justify-center border border-l-0 border-[#b4b4b4] bg-white py-[11px]">
          <Icon name="operNav" />
        </button>
        <SideButton name="calendar" />
        <SideButton name="machine" />
        <SideButton name="books" />
      </div>
      <div className="mt-9 flex flex-col items-center gap-[35px]">
        <SideButton name="feed" />
        <SideButton name="page" />
        <SideButton name="clock" />
      </div>
      <div className="mt-[23px] flex flex-col items-center gap-[21px]">
        <SideButton name="spectrum" />
        <SideButton name="drill" />
        <SideButton name="robot" />
        <SideButton name="door" />
      </div>
      <svg className="mt-1" width="33" height="82" viewBox="0 0 33 82" aria-hidden="true">
        <path d="M1 4c8 7 11 2 17-1s10-2 15 1" fill="none" stroke="#777" strokeWidth="2" />
        <path d="M12 20h9l-4.500-4zM12 22h9v1.500h-9zM13 38h7l-3.500-4z" fill="#aaa" />
        <path d="M13 53h7l-3.500 4zM12 71h9v1.500h-9zM13 74h7l-3.500 4z" fill="#222" />
      </svg>
    </nav>
  );
}

function ToolDialog() {
  const [tab, setTab] = useState('刀柄');
  const [shank, setShank] = useState(false);
  const [preview, setPreview] = useState(true);
  const check = 'h-[15px] w-[15px] appearance-none border border-[#333] bg-white checked:bg-white';
  return (
    <div role="dialog" aria-label="铣刀-5 参数" className="absolute top-[23px] right-[332px] bottom-10 flex w-[385px] flex-col border border-t-0 border-[#bdbdbd] bg-[#e8e8e8] text-sm leading-5 text-[#222]">
      <header className="flex h-[29px] shrink-0 items-center bg-[#5c8784] pr-[9px] pl-2 text-white">
        <Gear color="#fff" size={18} />
        <h1 className="ml-[10px] text-[15px]">铣刀-5 参数</h1>
        <button type="button" aria-label="关闭" className="ml-auto">
          <svg width="16" height="16" viewBox="0 0 16 16" stroke="#fff" strokeWidth="2.500"><path d="M2 2l12 12M14 2L2 14" /></svg>
        </button>
      </header>
      <div role="tablist" className="flex shrink-0 items-end px-[13px] pt-2">
        {['工具', '刀柄', '夹持器', '更多'].map((t) => (
          <button
            key={t}
            type="button"
            role="tab"
            aria-selected={t === tab}
            onClick={() => setTab(t)}
            className={
              t === tab
                ? 'relative z-10 -mb-px h-[37px] w-16 border border-b-0 border-[#bbb] bg-white text-[#3c8cbc]'
                : 'h-[34px] w-[60px] border border-b-0 border-[#d0d0d0]'
            }
          >
            {t}
          </button>
        ))}
      </div>
      <section className="mx-[11px] flex min-h-0 flex-1 flex-col border border-[#bbb] bg-white">
        <div className="flex items-center justify-between pt-[5px] pr-3 pl-[13px]">
          <h2 className="text-base leading-6 text-[#3c8cbc]">刀柄</h2>
          <Chevron />
        </div>
        <label className="mx-1 mt-2 flex items-center border-b border-[#b9c0bc] pt-[3px] pb-[13px] pl-[11px]">
          <input type="checkbox" checked={shank} onChange={(e) => setShank(e.target.checked)} className={check} />
          <span className="ml-[6px]">定义刀柄</span>
        </label>
      </section>
      <section className="mx-[11px] h-[110px] shrink-0 border-b border-[#bbb] bg-white">
        <div className="flex items-center justify-between pt-[3px] pr-[6px] pl-2">
          <h2 className="text-base leading-6 text-[#3c8cbc]">预览</h2>
          <Chevron />
        </div>
        <div className="mt-2 flex items-center pr-[10px] pl-[11px]">
          <label className="flex items-center">
            <span className="relative flex">
              <input type="checkbox" checked={preview} onChange={(e) => setPreview(e.target.checked)} className={check} />
              {preview && (
                <svg className="pointer-events-none absolute inset-0" width="15" height="15" viewBox="0 0 15 15" fill="none" stroke="#333" strokeWidth="1.500"><path d="M3 7l3 4 6-8" /></svg>
              )}
            </span>
            <span className="ml-[6px]">预览</span>
          </label>
          <span className="mr-[2px] ml-auto">显示</span>
          <button type="button" aria-label="显示" className="flex h-[38px] w-[38px] items-center justify-center border border-[#aaa]">
            <svg width="28" height="28" viewBox="0 0 28 28">
              <path d="M2 5c0-3 3-4 5-3l9 8 9 4-8 12-4-9L3 8z" fill="#2e5fd0" stroke="#14266e" />
              <path d="M5 5l9 8" stroke="#8db4f5" strokeWidth="2" />
              <ellipse cx="21" cy="20" rx="7" ry="4" transform="rotate(-56 21 20)" fill="#efe45a" stroke="#14266e" />
            </svg>
          </button>
        </div>
      </section>
      <footer className="flex shrink-0 justify-end gap-[6px] pt-[18px] pr-[18px] pb-[11px]">
        <button type="button" className="h-[29px] w-[63px] border border-[#a9a9a9] bg-[#c9cbce]">确定</button>
        <button type="button" className="h-[29px] w-[63px] border border-[#a9a9a9] bg-[#c9cbce]">取消</button>
      </footer>

      {/* pointer highlight */}
      <div className="pointer-events-none absolute top-[117px] left-[32px] z-20 h-[68px] w-[68px] rounded-full bg-[#ffff00] mix-blend-multiply" />
      <svg className="pointer-events-none absolute top-[152px] left-[66px] z-30" width="15" height="24" viewBox="0 0 15 24">
        <path d="M1 1v18l4-4 4 7 3-1-3-7h5z" fill="#fff" stroke="#222" />
      </svg>
    </div>
  );
}

const App = () => {
  const [query, setQuery] = useState('');

  return (
    <div className="flex h-screen bg-white font-['Open_Sans','Noto_Sans_CJK_SC',sans-serif]">
      <div className="w-1/12 shrink-0 bg-[linear-gradient(#bcbcbe,#8e8e90_14%,#4c4c4e_34%,#57575a_55%,#707072_80%,#959597_95%)]" />

      <div className="relative flex min-w-0 flex-1 flex-col overflow-hidden border-l-2 border-white">
        <header className="flex h-8 shrink-0 items-center bg-[#c8d8d7] pr-2 pl-[2px] text-[13px] leading-5 text-[#1c1c1c]">
          <Grip />
          <div className="mr-1 pt-1 pl-px"><Icon name="app" size={20} /></div>
          <MenuGroup items={fileMenus} className="gap-[17px]" />
          <MenuGroup items={extraMenus} className="ml-6 gap-4" />
          <div className="ml-auto flex items-center gap-2 pb-1">
            <button type="button" aria-label="最小化"><svg width="10" height="14" viewBox="0 0 10 14"><path d="M0 11h9v2H0z" fill="#222" /></svg></button>
            <button type="button" aria-label="还原"><svg width="15" height="14" viewBox="0 0 15 14" fill="none" stroke="#222" strokeWidth="1.500"><path d="M1 6h9v7H1zM4 6V2h10v6h-4" /><path d="M1 6.500h9M4 2h10" strokeWidth="3" /></svg></button>
            <button type="button" aria-label="关闭"><svg width="12" height="12" viewBox="0 0 12 12" stroke="#a9b3b2" strokeWidth="2.500"><path d="M1 1l10 10M11 1L1 11" /></svg></button>
          </div>
        </header>

        <div className="flex h-10 shrink-0 items-center border-b-2 border-[#dedede] pl-[2px]">
          <Grip />
          <button type="button" className="flex shrink-0 items-center text-[13px] text-[#111]">
            <span className="flex w-9 justify-center"><Icon name="start" /></span>
            <span className="ml-px">启动</span>
            <Arrow />
          </button>
          <Strip items={['file', 'open', 'save', 'print', '|', 'cut', 'copy', 'paste', 'del', '|', 'undo', 'v', '|', 'weld', 'v', '|', 'info', '|']} />
          <label className="mr-1 ml-[3px] flex h-[23px] w-[147px] shrink-0 items-center border border-[#9a9a9a] bg-white">
            <input aria-label="查找命令" value={query} onChange={(e) => setQuery(e.target.value)} placeholder="查找命令" className="w-0 flex-1 pl-[2px] text-[13px] leading-5 outline-none placeholder:text-[#222]" />
            <svg className="mr-[2px]" width="19" height="19" viewBox="0 0 19 19" fill="none" stroke="#444"><circle cx="12" cy="7" r="5" strokeWidth="1.500" /><circle cx="12" cy="7" r="2.500" stroke="#bbb" /><path d="M8 11l-6 6" strokeWidth="3" /></svg>
          </label>
          <Strip items={['_', '|', ':', 'fit', 'v', 'seat', 'v', 'cube', 'v']} />
          <div className="mr-[224px] ml-auto flex h-full items-center border-r border-[#d6d6d6] pr-px">
            <Strip items={['chain', 'shapes', 'letterA', '_']} />
          </div>
        </div>

        <div className="flex h-10 shrink-0 items-center border-b-2 border-[#dedede] pl-[2px]">
          <Grip />
          <Strip items={['sheet', 'v']} />
          <div className="flex w-[546px] shrink-0 justify-between">
            <Strip items={['abs', 'dims', 'layers', 'left', 'right', 'leftBox', 'rightBox', 'leftPane', 'rightPane', 'boxIn', 'slab', 'wire', 'cone', 'hexBox', 'sack']} />
          </div>
          <Strip items={['_', '|', ':', 'resize', 'boxes', 'pedestal', 'ruler', 'caged', 'hook', 'mesh']} />
          <div className="ml-auto flex items-center">
            <Strip items={['hexagon', 'v', 'spool', 'notch', 'xyz', 'target', 'hole', 'text3d', 'circle']} />
            <div className="ml-[14px] flex w-4 flex-col items-center gap-3">
              <svg width="10" height="8" viewBox="0 0 10 8" fill="none" stroke="#111" strokeWidth="1.500"><path d="M1 1l3 3-3 3M6 1l3 3-3 3" /></svg>
              <svg width="7" height="4" viewBox="0 0 7 4"><path d="M0 0h7L3.500 4z" fill="#111" /></svg>
            </div>
          </div>
        </div>

        <div className="flex h-[38px] shrink-0 items-center pl-[6px]">
          <DropDown label="类型过滤器" value="" className="mr-2 w-[156px]" arrow="#999" />
          <DropDown label="选择范围" value="仅在工作部件内" className="mr-px w-[165px]" arrow="#999" />
          <Strip items={['link', '|', 'filter', 'filterOn', 'v', 'back', 'tree', '|', 'hexDot', 'marquee', 'v', '|', 'shell', 'section', '|', 'explode', 'lineEnd', 'lineMid', 'curve', 'arc']} />
          <span className="mr-[2px] ml-auto flex"><Arrow low /></span>
        </div>

        <main className="flex min-h-0 flex-1">
          <div className="min-w-0 flex-1 bg-[#555658]"><Viewport /></div>
          <Navigator />
          <Sidebar />
        </main>

        <div className="flex h-10 shrink-0 items-center border-b border-[#aaa] pl-[2px]">
          <Grip />
          <DropDown label="工作图层" value="1" className="mx-1 w-[58px]" arrow="#111" />
          <Strip items={['sheets', 'sheets', 'v', 'wcs', 'v', '|', 'pointTo', 'palette', '|', 'play', 'v', '|', 'hatch', 'v', 'measure', '_', '|', ':', 'rainbow', 'v', 'plus', 'v', 'extrude', 'v', 'column', 'bound', 'frame', 'v', '_', '|']} />
        </div>
        <footer className="flex h-[27px] shrink-0 items-center justify-end border-b border-[#aaa] pr-[62px]">
          <svg width="20" height="20" viewBox="0 0 20 20" fill="none" stroke="#777" strokeWidth="1.500">
            <path d="M1 5V1h4M15 1h4v4M19 15v4h-4M5 19H1v-4" />
            <path d="M5 4h10v12H5z" />
            <path d="M7 8h6v5H7z" fill="#4a8ccc" stroke="none" />
          </svg>
        </footer>

        <ToolDialog />
      </div>

      <div className="w-1/12 shrink-0 bg-linear-to-b from-[#eceff0] to-[#f5f5f6] to-30%" />
    </div>
  );
};

export default App;
